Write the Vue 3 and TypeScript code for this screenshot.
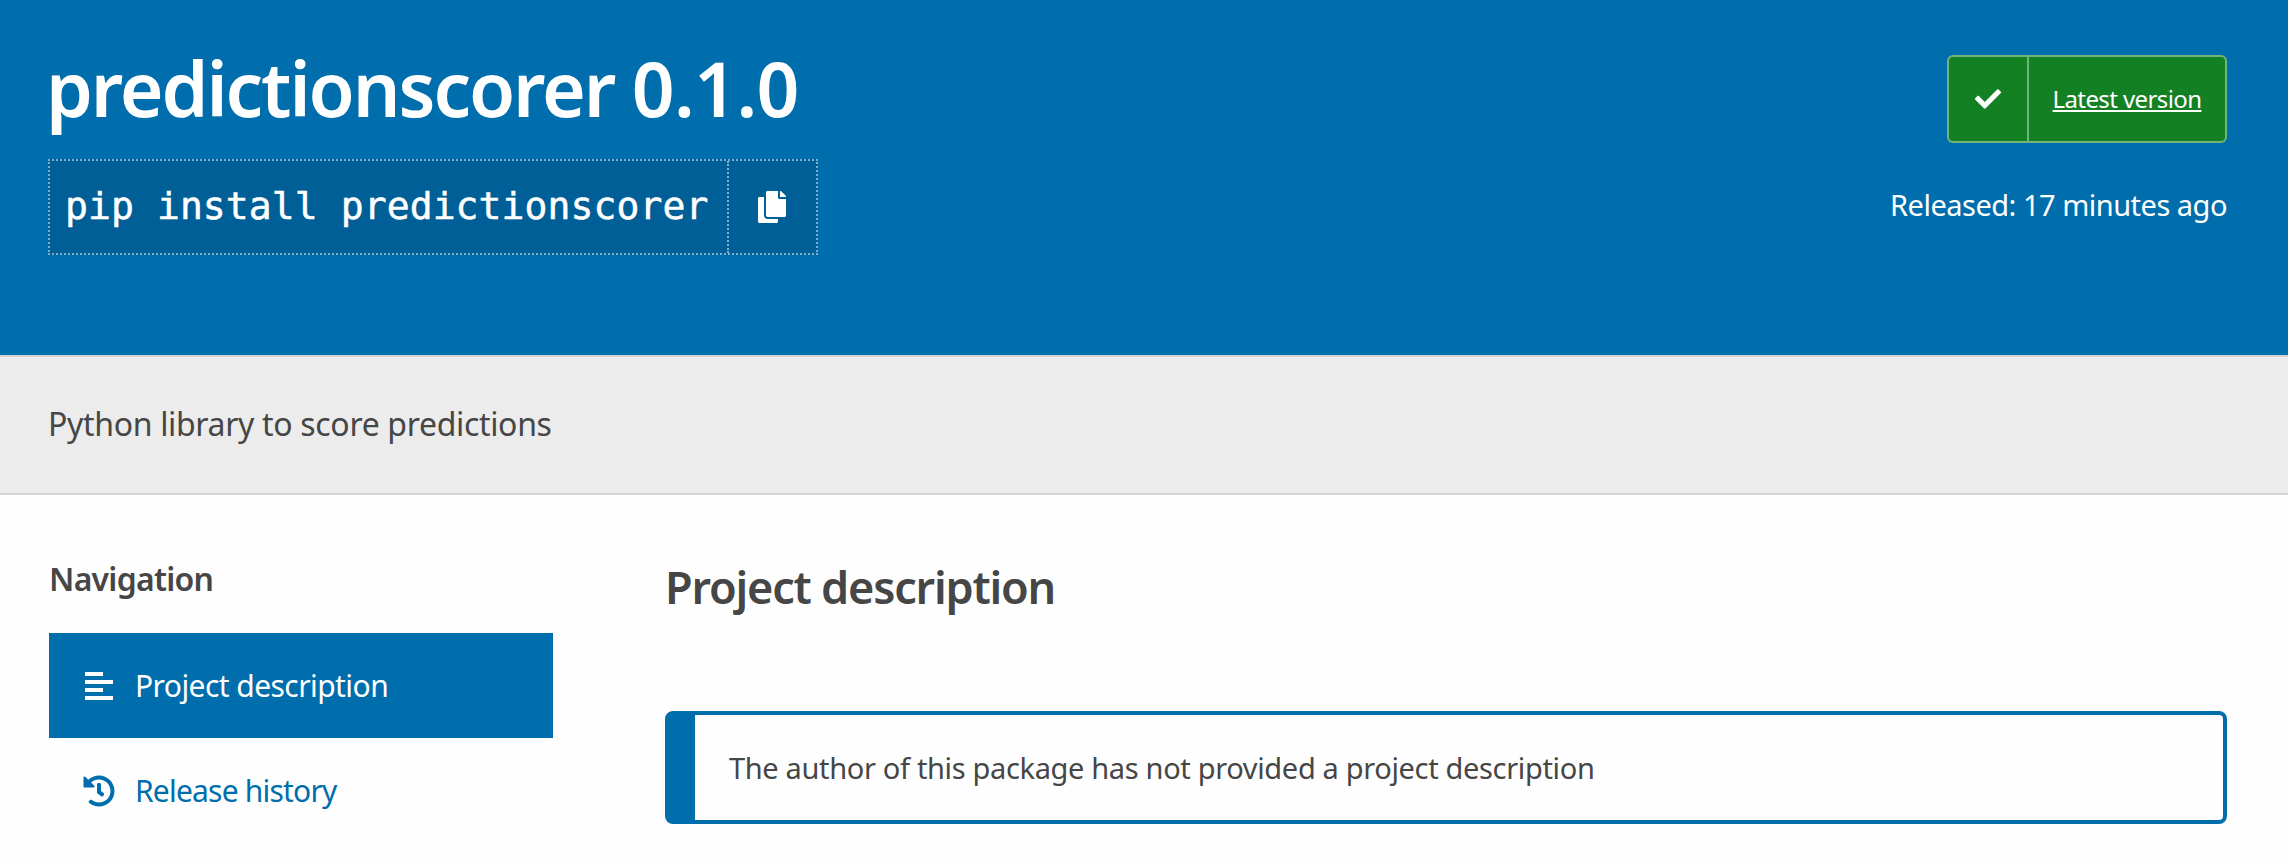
<script setup lang="ts">
const navItems = [
  { label: "Project description", icon: "lines", active: true },
  { label: "Release history", icon: "history", active: false },
];
</script>

<template>
  <div class="page">
    <header class="banner">
      <div class="banner__left">
        <h1 class="banner__title">predictionscorer <span class="banner__version">0.1.0</span></h1>
        <div class="pip">
          <span class="pip__cmd">pip install predictionscorer</span>
          <span class="pip__copy">
            <svg class="pip__icon" viewBox="0 0 448 512" fill="currentColor">
              <path d="M320 448v40c0 13.255-10.745 24-24 24H24c-13.255 0-24-10.745-24-24V120c0-13.255 10.745-24 24-24h72v296c0 30.879 25.121 56 56 56h168zm0-344V0H152c-13.255 0-24 10.745-24 24v368c0 13.255 10.745 24 24 24h272c13.255 0 24-10.745 24-24V128H344c-13.2 0-24-10.8-24-24zm120.971-31.029L375.029 7.029A24 24 0 0 0 358.059 0H352v96h96v-6.059a24 24 0 0 0-7.029-16.97z" />
            </svg>
          </span>
        </div>
      </div>
      <div class="banner__right">
        <div class="badge">
          <span class="badge__icon">
            <svg class="badge__check" viewBox="0 0 512 512" fill="currentColor">
              <path d="M173.898 439.404l-166.4-166.4c-9.997-9.997-9.997-26.206 0-36.204l36.203-36.204c9.997-9.998 26.207-9.998 36.204 0L192 312.69 432.095 72.596c9.997-9.997 26.207-9.997 36.204 0l36.203 36.204c9.997 9.997 9.997 26.206 0 36.204l-294.4 294.401c-9.998 9.997-26.207 9.997-36.204-.001z" />
            </svg>
          </span>
          <a class="badge__link" href="#">Latest version</a>
        </div>
        <p class="released">Released: 17 minutes ago</p>
      </div>
    </header>

    <section class="summary">Python library to score predictions</section>

    <main class="content">
      <aside class="side">
        <h3 class="side__title">Navigation</h3>
        <a
          v-for="item in navItems"
          :key="item.label"
          href="#"
          class="side__item"
          :class="{ 'side__item--active': item.active }"
        >
          <svg v-if="item.icon === 'lines'" class="side__icon" viewBox="0 0 28 28" fill="currentColor">
            <rect x="0" y="0" width="18" height="4" />
            <rect x="0" y="8" width="28" height="4" />
            <rect x="0" y="16" width="18" height="4" />
            <rect x="0" y="24" width="28" height="4" />
          </svg>
          <svg v-else class="side__icon side__icon--history" viewBox="0 0 512 512" fill="currentColor">
            <path d="M504 255.531c.253 136.64-111.18 248.372-247.82 248.468-59.015.042-113.223-20.53-155.822-54.911-11.077-8.94-11.905-25.541-1.839-35.607l11.267-11.267c8.609-8.609 22.353-9.551 31.891-1.984C173.062 425.135 212.781 440 256 440c101.705 0 184-82.311 184-184 0-101.705-82.311-184-184-184-48.814 0-93.149 18.969-126.068 49.932l50.754 50.754c10.08 10.08 2.941 27.314-11.313 27.314H24c-8.837 0-16-7.163-16-16V38.627c0-14.254 17.234-21.393 27.314-11.314l49.372 49.372C129.209 34.136 189.552 8 256 8c136.81 0 247.747 110.78 248 247.531zm-180.912 78.784l9.823-12.63c8.138-10.463 6.253-25.542-4.21-33.679L288 256.349V152c0-13.255-10.745-24-24-24h-16c-13.255 0-24 10.745-24 24v135.651l65.409 50.874c10.463 8.137 25.541 6.253 33.679-4.21z" />
          </svg>
          <span>{{ item.label }}</span>
        </a>
      </aside>
      <div class="desc">
        <h2 class="desc__title">Project description</h2>
        <div class="notice">The author of this package has not provided a project description</div>
      </div>
    </main>
  </div>
</template>

<style>
html,
body {
  margin: 0;
  background: #fefefe;
}
</style>

<style scoped>
.page {
  height: 866px;
  overflow: hidden;
  font-family: "Noto Sans", "Liberation Sans", sans-serif;
  color: #464646;
  background: #fefefe;
}
.banner {
  box-sizing: border-box;
  height: 355px;
  padding: 0 61px 0 48px;
  display: flex;
  justify-content: space-between;
  background: #006dad;
  color: #fff;
}
.banner__title {
  margin: 38px 0 0 -2px;
  font-size: 75px;
  line-height: 100px;
  font-weight: 600;
  letter-spacing: -2.1px;
}
.banner__version {
  letter-spacing: -0.6px;
}
.pip {
  margin-top: 21px;
  display: flex;
  width: 770px;
  height: 96px;
  box-sizing: border-box;
  border: 2px dotted rgba(255, 255, 255, 0.5);
  background: #005f97;
}
.pip__cmd {
  width: 679px;
  flex: none;
  box-sizing: border-box;
  padding-left: 15px;
  font-family: "DejaVu Sans Mono", "Liberation Mono", monospace;
  font-size: 38px;
  letter-spacing: 0.1px;
  line-height: 90px;
  -webkit-text-stroke: 0.5px #fff;
  white-space: nowrap;
  border-right: 2px dotted rgba(255, 255, 255, 0.5);
}
.pip__copy {
  flex: 1;
  padding-right: 2px;
  display: flex;
  align-items: center;
  justify-content: center;
}
.pip__icon {
  width: 28px;
  height: 32px;
}
.banner__right {
  display: flex;
  flex-direction: column;
  align-items: flex-end;
  padding-top: 55px;
}
.badge {
  box-sizing: border-box;
  width: 280px;
  height: 88px;
  display: flex;
  border: 2px solid rgba(255, 255, 255, 0.4);
  border-radius: 6px;
  background: #148024;
}
.badge__icon {
  width: 78px;
  display: flex;
  align-items: center;
  justify-content: center;
  border-right: 2px solid rgba(255, 255, 255, 0.4);
}
.badge__check {
  width: 26px;
  height: 26px;
}
.badge__link {
  flex: 1;
  text-align: center;
  color: #fff;
  font-size: 24px;
  line-height: 83px;
  letter-spacing: -0.6px;
}
.released {
  margin: 42px 0 0;
  font-size: 29px;
  line-height: 40px;
  letter-spacing: -0.5px;
}
.summary {
  box-sizing: border-box;
  height: 140px;
  padding: 0 0 3px 48px;
  display: flex;
  align-items: center;
  background: #ececec;
  border-top: 2px solid #d3d3d3;
  border-bottom: 2px solid #d3d3d3;
  font-size: 32px;
  letter-spacing: -0.33px;
}
.content {
  display: flex;
  padding: 0 61px 0 49px;
}
.side {
  width: 504px;
  flex: none;
}
.side__title {
  margin: 62px 0 0;
  font-size: 32px;
  line-height: 44px;
  font-weight: 600;
  letter-spacing: -0.75px;
}
.side__item {
  height: 105px;
  padding-left: 36px;
  display: flex;
  align-items: center;
  gap: 22px;
  color: #006dad;
  font-size: 30px;
  letter-spacing: -0.8px;
  text-decoration: none;
}
.side__item--active {
  margin-top: 32px;
  background: #006dad;
  color: #fff;
  letter-spacing: -0.56px;
}
.side__icon {
  width: 28px;
  height: 28px;
  flex: none;
}
.side__icon--history {
  width: 32px;
  height: 32px;
  margin-left: -2px;
  margin-right: -2px;
}
.desc {
  flex: 1;
  margin-left: 112px;
}
.desc__title {
  margin: 62px 0 0;
  font-size: 45px;
  line-height: 60px;
  font-weight: 600;
  letter-spacing: -1.2px;
}
.notice {
  box-sizing: border-box;
  height: 113px;
  margin-top: 94px;
  padding-left: 34px;
  display: flex;
  align-items: center;
  border: 4px solid #006dad;
  border-left-width: 30px;
  border-radius: 8px;
  font-size: 29px;
  letter-spacing: -0.34px;
}
</style>
